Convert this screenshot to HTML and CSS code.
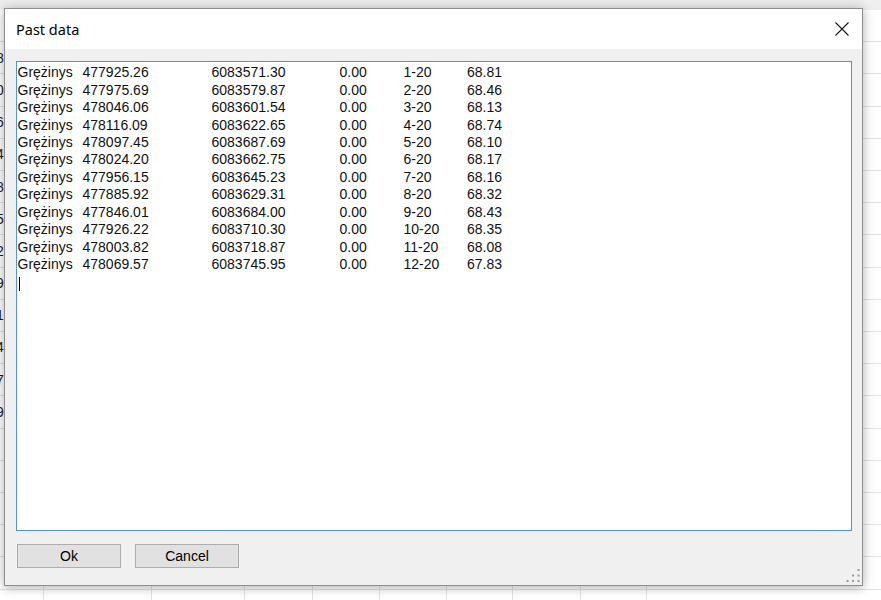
FILE: index.html
```html
<!DOCTYPE html>
<html>
<head>
<meta charset="utf-8">
<title>Past data</title>
<link rel="stylesheet" href="styles.css">
</head>
<body>
<div class="desk">
  <div class="strip"></div>
  <div class="sheet">
    <div class="rowheads">
      <div class="rh"></div>
      <div class="rh"><span>8</span></div>
      <div class="rh"><span>0</span></div>
      <div class="rh"><span>6</span></div>
      <div class="rh"><span>4</span></div>
      <div class="rh"><span>8</span></div>
      <div class="rh"><span>5</span></div>
      <div class="rh"><span>2</span></div>
      <div class="rh"><span>9</span></div>
      <div class="rh"><span>1</span></div>
      <div class="rh"><span>4</span></div>
      <div class="rh"><span>7</span></div>
      <div class="rh"><span>9</span></div>
    </div>
  </div>
</div>

<div class="dialog">
  <div class="titlebar">
    <span class="title">Past data</span>
    <svg class="close" width="14" height="14" viewBox="0 0 14 14"><path d="M0.5 0.5 L13.5 13.5 M13.5 0.5 L0.5 13.5" stroke="#1a1a1a" stroke-width="1.1" fill="none"/></svg>
  </div>
  <div class="body">
    <div class="textbox">
      <div class="data">
        <span>Grężinys</span><span>477925.26</span><span>6083571.30</span><span>0.00</span><span>1-20</span><span>68.81</span>
        <span>Grężinys</span><span>477975.69</span><span>6083579.87</span><span>0.00</span><span>2-20</span><span>68.46</span>
        <span>Grężinys</span><span>478046.06</span><span>6083601.54</span><span>0.00</span><span>3-20</span><span>68.13</span>
        <span>Grężinys</span><span>478116.09</span><span>6083622.65</span><span>0.00</span><span>4-20</span><span>68.74</span>
        <span>Grężinys</span><span>478097.45</span><span>6083687.69</span><span>0.00</span><span>5-20</span><span>68.10</span>
        <span>Grężinys</span><span>478024.20</span><span>6083662.75</span><span>0.00</span><span>6-20</span><span>68.17</span>
        <span>Grężinys</span><span>477956.15</span><span>6083645.23</span><span>0.00</span><span>7-20</span><span>68.16</span>
        <span>Grężinys</span><span>477885.92</span><span>6083629.31</span><span>0.00</span><span>8-20</span><span>68.32</span>
        <span>Grężinys</span><span>477846.01</span><span>6083684.00</span><span>0.00</span><span>9-20</span><span>68.43</span>
        <span>Grężinys</span><span>477926.22</span><span>6083710.30</span><span>0.00</span><span>10-20</span><span>68.35</span>
        <span>Grężinys</span><span>478003.82</span><span>6083718.87</span><span>0.00</span><span>11-20</span><span>68.08</span>
        <span>Grężinys</span><span>478069.57</span><span>6083745.95</span><span>0.00</span><span>12-20</span><span>67.83</span>
      </div>
      <div class="caretline"><span class="caret"></span></div>
    </div>
    <div class="buttons">
      <button class="btn">Ok</button>
      <button class="btn">Cancel</button>
    </div>
  </div>
  <svg class="grip" width="14" height="14" viewBox="0 0 14 14">
    <rect x="11.5" y="1" width="2" height="2" fill="#9a9a9a"/>
    <rect x="6" y="6.5" width="2" height="2" fill="#9a9a9a"/>
    <rect x="11.5" y="6.5" width="2" height="2" fill="#9a9a9a"/>
    <rect x="0.5" y="12" width="2" height="2" fill="#9a9a9a"/>
    <rect x="6" y="12" width="2" height="2" fill="#9a9a9a"/>
    <rect x="11.5" y="12" width="2" height="2" fill="#9a9a9a"/>
  </svg>
</div>
</body>
</html>
```
FILE: styles.css
```css
html, body {
  margin: 0;
  padding: 0;
}
body {
  width: 881px;
  height: 600px;
  overflow: hidden;
  position: relative;
  background: #ffffff;
  font-family: "Liberation Sans", Arial, sans-serif;
}
.desk {
  width: 881px;
  height: 600px;
  display: flex;
  flex-direction: column;
}
.strip {
  height: 9.6px;
  background: #efefef;
  flex: none;
}
.sheet {
  flex: 1;
  background-color: #fff;
  background-image:
    linear-gradient(#e2e2e2, #e2e2e2),
    linear-gradient(#e2e2e2, #e2e2e2),
    linear-gradient(#e2e2e2, #e2e2e2),
    linear-gradient(#e2e2e2, #e2e2e2),
    linear-gradient(#e2e2e2, #e2e2e2),
    linear-gradient(#e2e2e2, #e2e2e2),
    linear-gradient(#e2e2e2, #e2e2e2),
    linear-gradient(#e2e2e2, #e2e2e2),
    linear-gradient(#e2e2e2, #e2e2e2),
    repeating-linear-gradient(to bottom, transparent 0, transparent 31.2px, #e2e2e2 31.2px, #e2e2e2 32.2px);
  background-size: 1px 100%, 1px 100%, 1px 100%, 1px 100%, 1px 100%, 1px 100%, 1px 100%, 1px 100%, 1px 100%, 100% 100%;
  background-position: 43px 0, 151px 0, 244px 0, 312px 0, 379px 0, 446px 0, 512px 0, 580px 0, 646px 0, 0 0;
  background-repeat: no-repeat;
}
.rowheads {
  width: 43px;
  display: flex;
  flex-direction: column;
}
.rh {
  height: 32.2px;
  line-height: 32.2px;
  font-size: 14px;
  color: #1c1c1c;
}
.rh span {
  margin-left: -4px;
}

.dialog {
  position: absolute;
  left: 4px;
  top: 8px;
  width: 859px;
  height: 578px;
  box-sizing: border-box;
  border: 1px solid #8e8e8e;
  background: #f0f0f0;
  box-shadow: 0 0 12px rgba(0, 0, 0, 0.22), 0 3px 8px rgba(0, 0, 0, 0.12);
  display: flex;
  flex-direction: column;
}
.titlebar {
  height: 40px;
  flex: none;
  background: #ffffff;
  display: flex;
  align-items: center;
  justify-content: space-between;
  padding: 0 13px 0 11px;
}
.title {
  font-family: "Noto Sans", "Open Sans", sans-serif;
  font-size: 14.5px;
  color: #000;
}
.close {
  display: block;
}
.body {
  flex: 1;
  display: flex;
  flex-direction: column;
  padding: 12px 10px 0 11px;
}
.textbox {
  height: 470px;
  box-sizing: border-box;
  border: 1px solid #4f97d9;
  background: #ffffff;
  padding: 2.2px 0 0 0.5px;
  font-size: 14px;
  color: #111;
}
.data {
  display: grid;
  grid-template-columns: 65px 129px 128px 64px 63.5px 1fr;
  grid-auto-rows: 17.45px;
  line-height: 17.45px;
  white-space: nowrap;
}
.caretline {
  height: 17.45px;
  display: flex;
  align-items: center;
}
.caret {
  display: block;
  width: 1px;
  height: 14px;
  margin-left: 1.5px;
  margin-top: 3px;
  background: #000;
}
.buttons {
  display: flex;
  gap: 14px;
  margin-top: 13px;
  padding-left: 1px;
}
.btn {
  width: 104px;
  height: 24px;
  box-sizing: border-box;
  border: 1px solid #adadad;
  background: #e1e1e1;
  font-family: "Liberation Sans", Arial, sans-serif;
  font-size: 14px;
  color: #000;
  padding: 0;
  margin: 0;
  border-radius: 0;
}
.grip {
  position: absolute;
  right: 2px;
  bottom: 3px;
  display: block;
}
```
